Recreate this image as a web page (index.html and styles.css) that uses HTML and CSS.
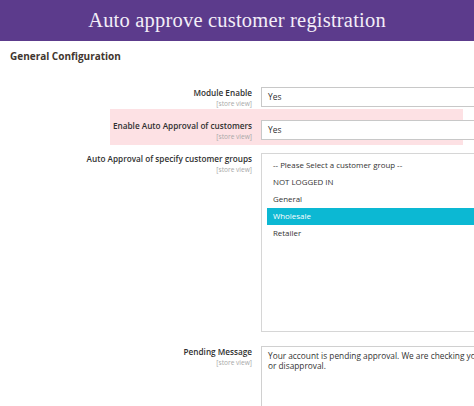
FILE: index.html
```html
<!DOCTYPE html>
<html lang="en">
<head>
<meta charset="UTF-8" />
<meta name="viewport" content="width=device-width, initial-scale=1" />
<title>Auto approve customer registration</title>
<link rel="stylesheet" href="styles.css">
</head>
<body>

<header class="banner">
  <h1>Auto approve customer registration</h1>
</header>

<h2 class="section-title">General Configuration</h2>

<div class="config-form">

  <div class="field">
    <div class="field-label">
      <span class="label-text">Module Enable</span>
      <span class="scope">[store view]</span>
    </div>
    <div class="field-control">
      <div class="input">Yes</div>
    </div>
  </div>

  <div class="field field-highlight">
    <div class="field-label">
      <span class="label-text">Enable Auto Approval of customers</span>
      <span class="scope">[store view]</span>
    </div>
    <div class="field-control">
      <div class="input">Yes</div>
    </div>
  </div>

  <div class="field field-groups">
    <div class="field-label">
      <span class="label-text">Auto Approval of specify customer groups</span>
      <span class="scope">[store view]</span>
    </div>
    <div class="field-control">
      <div class="multiselect">
        <div class="option">-- Please Select a customer group --</div>
        <div class="option">NOT LOGGED IN</div>
        <div class="option">General</div>
        <div class="option selected">Wholesale</div>
        <div class="option">Retailer</div>
      </div>
    </div>
  </div>

  <div class="field field-message">
    <div class="field-label">
      <span class="label-text">Pending Message</span>
      <span class="scope">[store view]</span>
    </div>
    <div class="field-control">
      <div class="textarea">Your account is pending approval. We are checking your details
or disapproval.</div>
    </div>
  </div>

</div>

</body>
</html>
```

FILE: styles.css
```css
body {
  margin: 0;
  background: #fff;
  color: #303030;
  font-family: 'Open Sans', 'Liberation Sans', sans-serif;
  overflow: hidden;
}
.banner {
  height: 41px;
  background: #5c3b8c;
  display: flex;
  align-items: center;
  justify-content: center;
}
.banner h1 {
  margin: 0;
  color: #f3eef8;
  font-family: 'Liberation Serif', serif;
  font-weight: normal;
  font-size: 20.5px;
  letter-spacing: 0.2px;
}
.section-title {
  margin: 0;
  padding: 8px 10px;
  font-size: 10px;
  line-height: 14px;
  font-weight: bold;
  color: #41362f;
}
.config-form {
  padding-top: 16px;
}
.field {
  display: grid;
  grid-template-columns: 252px 280px;
  column-gap: 9px;
  margin-bottom: 1px;
}
.field-label {
  display: flex;
  flex-direction: column;
  align-items: flex-end;
  text-align: right;
}
.label-text {
  font-size: 8.2px;
  line-height: 12px;
  font-weight: 600;
  color: #303030;
}
.scope {
  font-size: 6.6px;
  line-height: 9px;
  color: #a8a8a8;
}
.field-highlight {
  padding: 11px 0 4px;
  margin-bottom: 8px;
  background: linear-gradient(to right,
    transparent 110px, #fde1e4 110px, #fde1e4 463px, transparent 463px);
}
.input {
  height: 18px;
  border: 1px solid #c8c8c8;
  background: #fff;
  padding: 0 6px;
  font-size: 8.4px;
  line-height: 18px;
}
.multiselect {
  height: 171px;
  border: 1px solid #d6d6d6;
  background: #fff;
  padding: 3px 0 3px 5px;
}
.option {
  height: 17px;
  line-height: 17px;
  padding-left: 6px;
  font-size: 7.9px;
  color: #333;
  white-space: nowrap;
}
.option.selected {
  background: #0cb8d3;
  color: #fff;
}
.field-message {
  margin-top: 14px;
}
.textarea {
  height: 68px;
  border: 1px solid #d0d0d0;
  background: #fff;
  padding: 4px 6px;
  font-size: 8.3px;
  line-height: 10px;
  color: #333;
  white-space: pre-line;
}
```
